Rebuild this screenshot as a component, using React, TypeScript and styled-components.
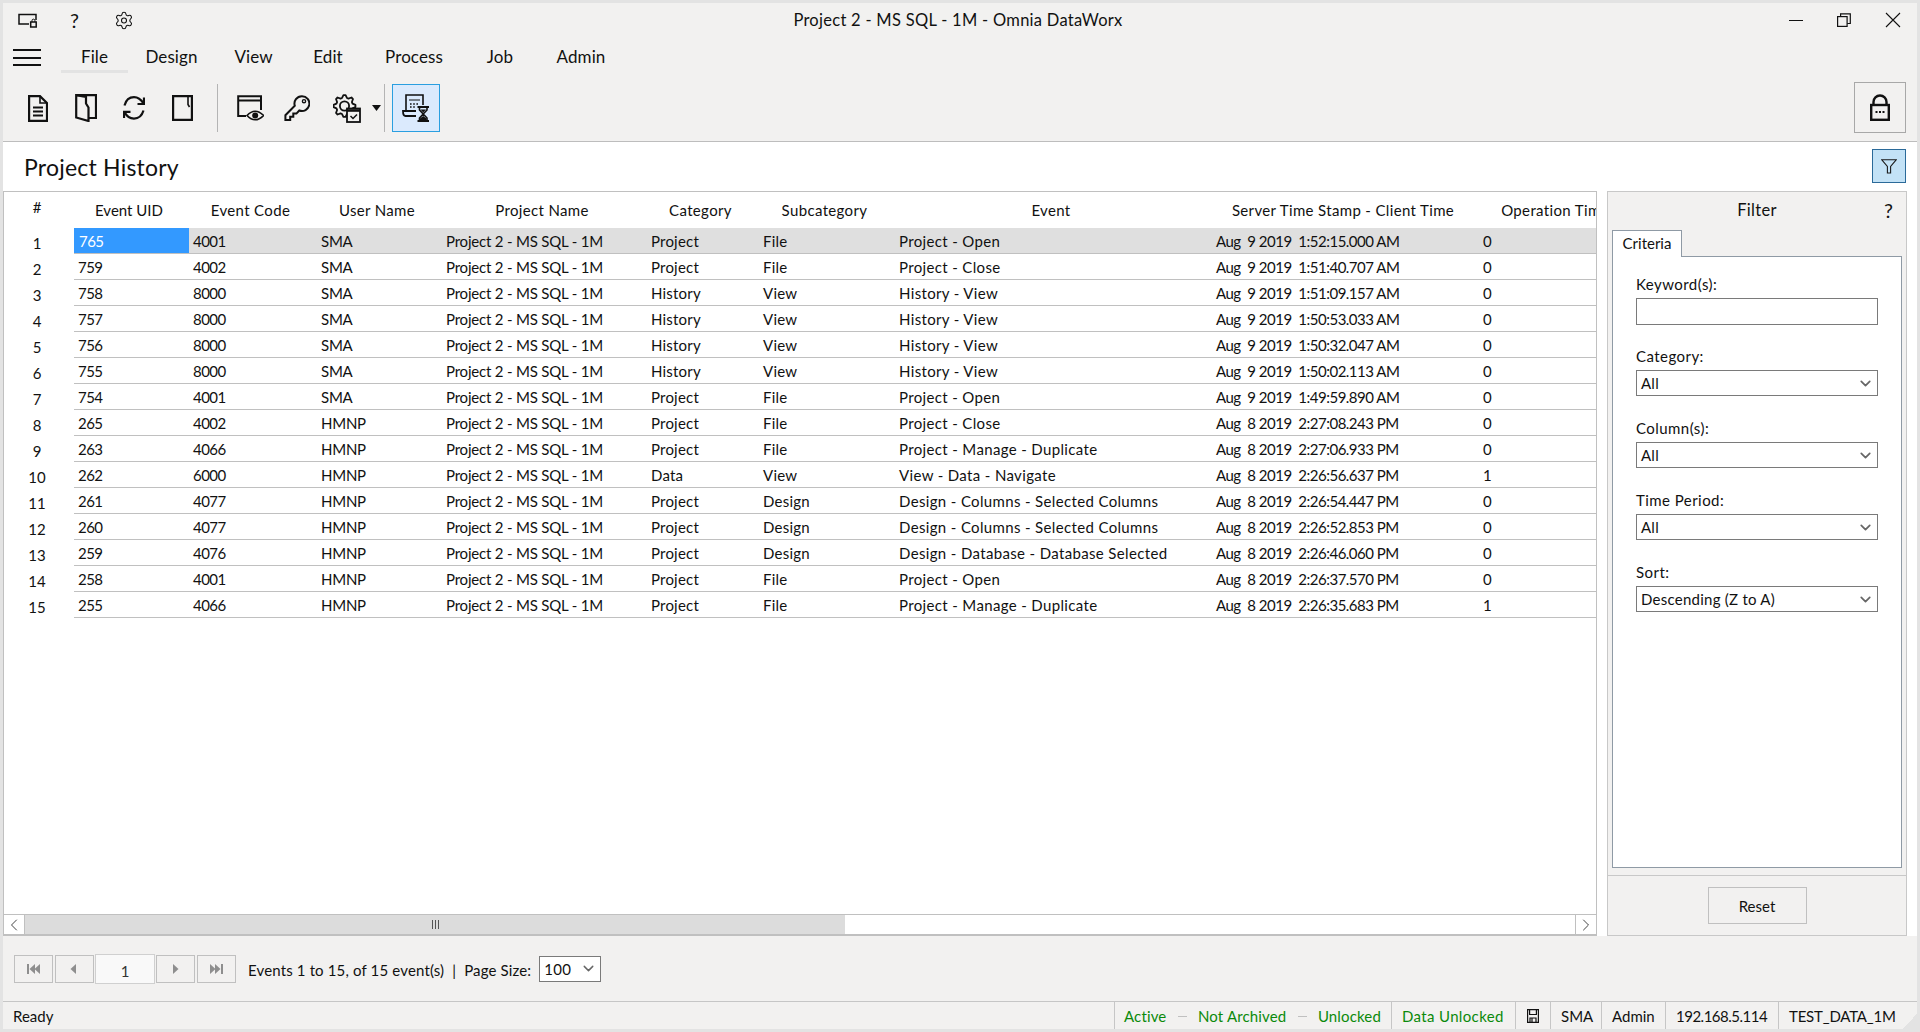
import * as React from 'react';
import styled, { createGlobalStyle } from 'styled-components';
import { ChevronDown, ChevronLeft, ChevronRight, Settings } from 'lucide-react';

const FONT = `Lato, "Noto Sans", "Liberation Sans", sans-serif`;

const GlobalStyle = createGlobalStyle`
  html, body {
    margin: 0;
    padding: 0;
    background: #fff;
    overflow: hidden;
  }
  * {
    box-sizing: border-box;
  }
  body {
    font-family: ${FONT};
    color: #111;
  }
`;

const Frame = styled.div`
  width: 1920px;
  height: 1032px;
  border: 3px solid #e3e3e3;
  display: flex;
  flex-direction: column;
  background: #f2f1f0;
`;

const TitleBar = styled.div`
  flex: none;
  height: 34px;
  display: grid;
  grid-template-columns: 1fr auto 1fr;
  align-items: center;
`;

const QuickIcons = styled.div`
  display: flex;
  align-items: center;
  padding-left: 15px;
`;

const QuickIcon = styled.span<{ $w: number }>`
  width: ${(p) => p.$w}px;
  display: flex;
  align-items: center;
  justify-content: flex-start;
  font-size: 20px;
`;

const WindowTitle = styled.div`
  font-size: 16.5px;
  margin-right: 4px;
  letter-spacing: 0.28px;
`;

const WindowButtons = styled.div`
  display: flex;
  justify-content: flex-end;
  align-items: center;
  gap: 34px;
  padding-right: 16px;
`;

const MenuBar = styled.div`
  flex: none;
  height: 37px;
  display: flex;
  align-items: flex-start;
`;

const Hamburger = styled.div`
  width: 28px;
  height: 17px;
  margin: 12px 20px 0 10px;
  border-top: 2px solid #111;
  border-bottom: 2px solid #111;
  position: relative;
  &::after {
    content: '';
    position: absolute;
    left: 0;
    right: 0;
    top: 6px;
    height: 2px;
    background: #111;
  }
`;

const MenuItem = styled.div<{ $w: number; $active?: boolean }>`
  width: ${(p) => p.$w}px;
  height: 36px;
  padding-top: 9px;
  line-height: 22px;
  font-size: 17px;
  letter-spacing: 0.1px;
  text-align: center;
  border-bottom: 3px solid ${(p) => (p.$active ? '#e3e3e3' : 'transparent')};
`;

const Toolbar = styled.div`
  flex: none;
  height: 68px;
  display: flex;
  align-items: center;
  padding-top: 1px;
  border-bottom: 1px solid #bdbdbd;
`;

const ToolIcon = styled.span<{ $left: number }>`
  display: flex;
  margin-left: ${(p) => p.$left}px;
`;

const ToolSeparator = styled.span<{ $left: number }>`
  width: 1px;
  height: 48px;
  background: #b4b4b4;
  margin-left: ${(p) => p.$left}px;
`;

const ActiveTool = styled.button`
  width: 48px;
  height: 48px;
  margin-left: 7px;
  padding: 0;
  border: 1px solid #2a9fe0;
  background: #dbeafd;
  display: flex;
  align-items: center;
  justify-content: center;
`;

const LockButton = styled.button`
  margin: -1px 11px 0 auto;
  width: 52px;
  height: 51px;
  padding: 0;
  border: 1px solid #a8a8a8;
  background: transparent;
  display: flex;
  align-items: center;
  justify-content: center;
`;

const Workspace = styled.div`
  flex: none;
  background: #fff;
  display: flex;
  flex-direction: column;
`;

const PageHead = styled.div`
  height: 49px;
  padding: 7px 11px 0 21px;
  display: flex;
  justify-content: space-between;
  align-items: flex-start;
`;

const PageTitle = styled.h1`
  margin: 1px 0 0;
  font-size: 23px;
  line-height: 34px;
  font-weight: 400;
  letter-spacing: 0.22px;
`;

const FilterToggle = styled.button`
  width: 34px;
  height: 34px;
  padding: 0;
  border: 1px solid #2b6a99;
  background: #c3e2f6;
  display: flex;
  align-items: center;
  justify-content: center;
`;

const MainRow = styled.div`
  height: 745px;
  display: flex;
  gap: 10px;
  padding-right: 10px;
`;

const TableBox = styled.div`
  width: 1594px;
  border: 1px solid #c0c0c0;
  border-bottom-width: 2px;
  display: flex;
  flex-direction: column;
  overflow: hidden;
`;

const TableBody = styled.div`
  flex: 1;
  overflow: hidden;
  font-size: 15px;
`;

const COLUMNS = '115px 128px 125px 205px 112px 136px 317px 267px 157px';

// the reference font sets digits narrower and words wider than ours
const COLUMN_SPACING = [-0.55, -0.55, -0.25, -0.2, 0.2, 0.25, 0.35, -0.5, 0];

const HeadRow = styled.div`
  display: flex;
  height: 36px;
`;

const HeadNumber = styled.div`
  width: 70px;
  flex: none;
  padding: 6px 4px 0 0;
  text-align: center;
  line-height: 18px;
`;

const HeadCells = styled.div`
  display: grid;
  grid-template-columns: ${COLUMNS};
  flex: none;
`;

const HeadCell = styled.div`
  padding: 8px 5px 0 0;
  line-height: 20px;
  text-align: center;
  white-space: nowrap;
  letter-spacing: 0.35px;
  &:first-child {
    letter-spacing: 0;
  }
`;

const DataRow = styled.div`
  display: flex;
  height: 26px;
`;

const RowNumber = styled.div`
  width: 70px;
  flex: none;
  padding: 2px 4px 0 0;
  line-height: 26px;
  text-align: center;
`;

const DataCells = styled.div<{ $selected?: boolean }>`
  display: grid;
  grid-template-columns: ${COLUMNS};
  flex: none;
  height: 26px;
  border-bottom: 1px solid #c0c0c0;
  background: ${(p) => (p.$selected ? '#dfdfdf' : 'transparent')};
`;

const DataCell = styled.div<{ $current?: boolean; $spacing: number }>`
  height: 25px;
  padding: 1px 0 0 ${(p) => (p.$current ? 5 : 4)}px;
  line-height: 24px;
  letter-spacing: ${(p) => p.$spacing}px;
  white-space: pre;
  overflow: hidden;
  background: ${(p) => (p.$current ? '#3399ff' : 'transparent')};
  color: ${(p) => (p.$current ? '#fff' : '#111')};
`;

const ScrollBar = styled.div`
  height: 20px;
  display: flex;
  border-top: 1px solid #c0c0c0;
`;

const ScrollArrow = styled.div`
  width: 21px;
  display: flex;
  align-items: center;
  justify-content: center;
  color: #444;
  background: #fff;
`;

const ScrollArrowLeft = styled(ScrollArrow)`
  border-right: 1px solid #c0c0c0;
`;

const ScrollArrowRight = styled(ScrollArrow)`
  border-left: 1px solid #c0c0c0;
`;

const ScrollThumb = styled.div`
  width: 820px;
  background: #dcdcdc;
  display: flex;
  align-items: center;
  justify-content: center;
  gap: 2px;
  span {
    width: 1px;
    height: 9px;
    background: #555;
  }
`;

const ScrollTrack = styled.div`
  flex: 1;
`;

const FilterPanel = styled.aside`
  width: 300px;
  border: 1px solid #c8c8c8;
  background: #f2f1f0;
  display: flex;
  flex-direction: column;
  font-size: 15px;
`;

const FilterHead = styled.div`
  height: 38px;
  display: grid;
  grid-template-columns: 1fr auto;
  align-items: center;
  padding: 0 13px 2px 22px;
`;

const FilterTitle = styled.div`
  text-align: center;
  font-size: 16.5px;
  letter-spacing: 0.3px;
`;

const FilterHelp = styled.div`
  font-size: 20px;
`;

const TabRow = styled.div`
  display: flex;
  padding-left: 4px;
  margin-bottom: -1px;
  position: relative;
`;

const Tab = styled.div`
  width: 70px;
  height: 27px;
  line-height: 24px;
  text-align: center;
  background: #fff;
  border: 1px solid #8f9aa5;
  border-bottom: none;
`;

const TabPane = styled.div`
  margin: 0 4px;
  height: 612px;
  border: 1px solid #8f9aa5;
  background: #fff;
  padding: 18px 0 0 23px;
  display: flex;
  flex-direction: column;
  gap: 23px;
`;

const Field = styled.div`
  display: flex;
  flex-direction: column;
  gap: 5px;
`;

const FieldLabel = styled.label`
  line-height: 18px;
  letter-spacing: 0.45px;
`;

const KeywordInput = styled.input`
  width: 242px;
  height: 27px;
  margin-bottom: -1px;
  border: 1px solid #7a7a7a;
  background: #fff;
  padding: 0 4px;
`;

const SelectBox = styled.div<{ $w: number }>`
  width: ${(p) => p.$w}px;
  height: 26px;
  border: 1px solid #7a7a7a;
  background: #fff;
  padding: 0 3px 0 4px;
  letter-spacing: 0.25px;
  display: flex;
  align-items: center;
  justify-content: space-between;
  color: #111;
  svg {
    color: #666;
  }
`;

const FilterFoot = styled.div`
  flex: 1;
  margin-top: 7px;
  border-top: 1px solid #c8c8c8;
  display: flex;
  justify-content: center;
  padding-top: 11px;
`;

const ResetButton = styled.button`
  width: 99px;
  height: 37px;
  padding: 1px 0 0;
  border: 1px solid #c0c0c0;
  background: #f2f1f0;
  font: 15px ${FONT};
  color: #111;
`;

const Pager = styled.div`
  flex: none;
  height: 66px;
  border-bottom: 1px solid #c6c6c6;
  display: flex;
  align-items: center;
  padding: 0 0 0 11px;
  font-size: 15px;
`;

const PagerButton = styled.button`
  width: 39px;
  height: 28px;
  margin-right: 2px;
  padding: 0;
  border: 1px solid #c0c0c0;
  background: #f2f1f0;
  display: flex;
  align-items: center;
  justify-content: center;
`;

const PageNumber = styled.div`
  width: 60px;
  height: 30px;
  margin: 0 1px 0 -1px;
  border: 1px solid #d0d0d0;
  background: #f9f9f9;
  text-align: center;
  line-height: 33px;
  color: #333;
`;

const PagerText = styled.span`
  margin-left: 10px;
  padding-top: 3px;
  white-space: pre;
  letter-spacing: 0.15px;
`;

const PageSize = styled.div`
  margin-left: 8px;
`;

const StatusBar = styled.div`
  flex: 1;
  min-height: 0;
  display: flex;
  align-items: stretch;
  font-size: 15px;
  position: relative;
`;

const StatusReady = styled.div`
  width: 1111px;
  padding: 1px 0 0 10px;
  line-height: 26px;
`;

const StatusCell = styled.div<{ $w: number; $green?: boolean; $center?: boolean; $spacing?: number }>`
  width: ${(p) => p.$w}px;
  border-left: 1px solid #c6c6c6;
  padding: 1px 0 0 ${(p) => (p.$center ? 0 : 10)}px;
  display: flex;
  align-items: center;
  justify-content: ${(p) => (p.$center ? 'center' : 'flex-start')};
  color: ${(p) => (p.$green ? '#0b8a0b' : '#111')};
  letter-spacing: ${(p) => p.$spacing ?? 0}px;
  white-space: nowrap;
`;

const StateCell = styled(StatusCell)`
  justify-content: space-between;
  padding-left: 9px;
  padding-right: 10px;
`;

const StateDash = styled.span`
  width: 9px;
  height: 1px;
  background: #c0c0c0;
`;

const SizeGrip = styled.div`
  position: absolute;
  right: 0;
  bottom: 0;
  width: 15px;
  height: 15px;
  background: linear-gradient(135deg, transparent 50%, #e3e3e3 50%);
`;

// icons drawn to the pixel size they have in the toolbar
const MonitorLockIcon = () => (
  <svg width="19" height="15" viewBox="0 0 19 15" fill="none" stroke="#111" strokeWidth="1.5">
    <path d="M11 11H1V1.5H18V7" />
    <rect x="12.7" y="9" width="5.5" height="5" />
    <path d="M14 9V7.6a1.4 1.4 0 0 1 2.9 0V9" strokeWidth="1" />
  </svg>
);

const MinimizeIcon = () => (
  <svg width="14" height="14" viewBox="0 0 14 14" stroke="#111" strokeWidth="1">
    <path d="M0 7.5H14" />
  </svg>
);

const RestoreIcon = () => (
  <svg width="14" height="14" viewBox="0 0 14 14" fill="none" stroke="#111" strokeWidth="1.2">
    <rect x="0.6" y="3.6" width="9.5" height="9.8" />
    <path d="M3.6 3.5V.8H13.3V10.5H10.2" />
  </svg>
);

const CloseIcon = () => (
  <svg width="16" height="16" viewBox="0 0 16 16" stroke="#111" strokeWidth="1.1">
    <path d="M1 1L15 15M15 1L1 15" />
  </svg>
);

const DocIcon = () => (
  <svg width="20" height="27" viewBox="0 0 20 27" fill="none" stroke="#111" strokeWidth="2.2">
    <path d="M1.1 1.1H12L19 8V25.9H1.1Z" />
    <path d="M12 1.1V8H19" strokeWidth="1.6" />
    <path d="M5 12.5H15M5 16.5H15M5 20.5H15" />
  </svg>
);

const OpenBookIcon = () => (
  <svg width="22" height="28" viewBox="0 0 22 28" fill="none" stroke="#111" strokeWidth="2.2">
    <path d="M1 1.2H21V24H14" />
    <path d="M1.2 1.2L11 3V9.5L13.5 13.5V27L1.2 23.5Z" />
  </svg>
);

const RefreshIcon = () => (
  <svg width="22" height="24" viewBox="0 0 22 24" fill="none" stroke="#111" strokeWidth="2.2">
    <path d="M1.5 9.5C3 4 7 1.2 11 1.2C15 1.2 18 3.5 20.5 7.5" />
    <path d="M20.5 14.5C19 19.5 15.5 22.6 11 22.6C7 22.6 3.5 20 1.5 16" />
    <path d="M21 1.5V8H14.5M1 22V15.8H7.5" />
  </svg>
);

const BookIcon = () => (
  <svg width="21" height="26" viewBox="0 0 21 26" fill="none" stroke="#111" strokeWidth="2.2">
    <path d="M1.1 1.1H19.9V24.9H1.1Z" />
    <path d="M16 1V9.5L17.5 12" strokeWidth="1.6" />
  </svg>
);

const WindowEyeIcon = () => (
  <svg width="27" height="27" viewBox="0 0 27 27" fill="none" stroke="#111" strokeWidth="2">
    <path d="M24 15V1.2H1.2V21H9" />
    <path d="M1.2 5.5H24" />
    <path d="M10 20.5Q18 12 26.5 20.5Q18 29 10 20.5Z" fill="#f2f1f0" strokeWidth="1.6" />
    <circle cx="18.2" cy="20.5" r="3" fill="#111" stroke="none" />
  </svg>
);

const KeyIcon = () => (
  <svg width="26" height="27" viewBox="0 0 26 27" fill="none" stroke="#111" strokeWidth="2">
    <path d="M18 1.2a7.4 7.4 0 1 1-2.7 14.3L12.4 18.6H9.3V21.8H6.2V25H1.4V20.2L10.8 10.8A7.4 7.4 0 0 1 18 1.2Z" />
    <circle cx="20" cy="6.2" r="1.6" strokeWidth="1.4" />
  </svg>
);

const gearPath = (cx: number, cy: number, outer: number, inner: number, teeth: number) => {
  const pts: string[] = [];
  for (let i = 0; i < teeth * 4; i++) {
    const r = i % 4 === 0 || i % 4 === 1 ? outer : inner;
    const a = ((i - 0.5) / (teeth * 4)) * Math.PI * 2;
    pts.push(`${(cx + r * Math.cos(a)).toFixed(2)} ${(cy + r * Math.sin(a)).toFixed(2)}`);
  }
  return `M${pts.join('L')}Z`;
};

const GearBoxIcon = () => (
  <svg width="28" height="29" viewBox="0 0 28 29" fill="none" stroke="#111" strokeWidth="1.8">
    <path d={gearPath(11.5, 12, 11, 8.4, 8)} strokeLinejoin="round" />
    <circle cx="11.5" cy="12" r="4.6" />
    <rect x="14" y="14.5" width="13" height="13.5" fill="#f2f1f0" />
    <path d="M14 16.5H27" strokeWidth="2.6" />
    <path d="M17.5 22L20 24.5L24 20.5" strokeWidth="1.5" />
  </svg>
);

const HistoryIcon = () => (
  <svg width="28" height="28" viewBox="0 0 28 28" fill="none" stroke="#111" strokeWidth="1.6">
    <path d="M4 16V1H21V11" />
    <path d="M7 6H18" strokeWidth="1" />
    <path d="M8 10H9.6M11.2 10H12.8M14.4 10H16M8 13H9.6M11.2 13H12.8" strokeWidth="1.4" />
    <path d="M14 22H3.5C1.8 22 1 20.5 1 17H14" strokeWidth="1.8" />
    <path d="M15.5 13H27M15.5 27H27" strokeWidth="2" />
    <path d="M17.5 13V16L21.2 20L17.5 24V27M25 13V16L21.2 20L25 24V27" strokeWidth="1.6" />
    <path d="M18 27V24.5L21.2 22L24.5 24.5V27ZM18.5 15.5H24L21.2 18.5Z" fill="#111" stroke="none" />
  </svg>
);

const PadlockIcon = () => (
  <svg width="20" height="27" viewBox="0 0 20 27" fill="none" stroke="#111" strokeWidth="2.4">
    <path d="M3.5 11V8a6.5 6.5 0 0 1 13 0V11" />
    <rect x="1.2" y="11" width="17.6" height="14.8" />
    <path d="M5.5 18H7.5M9 18H11M12.5 18H14.5" strokeWidth="1.8" />
  </svg>
);

const FunnelIcon = () => (
  <svg width="16" height="15" viewBox="0 0 16 15" fill="none" stroke="#1a1a1a" strokeWidth="1.1">
    <path d="M.8 .8H15.2L9.6 7.4V14H6.4V7.4Z" />
  </svg>
);

const FloppyIcon = () => (
  <svg width="12" height="14" viewBox="0 0 12 14" fill="none" stroke="#111" strokeWidth="1.2">
    <path d="M.6 .6H11.4V13.4H.6Z" />
    <path d="M2.6 1V5.5H9.4V1M3 13V9H9V13M5 9.5V13" />
  </svg>
);

const PAGER_SHAPES: Record<string, string> = {
  first: 'M1 1H3V11H1ZM9 1V11L3.5 6ZM14 1V11L8.5 6Z',
  prev: 'M9 1V11L3.5 6Z',
  next: 'M5 1V11L10.5 6Z',
  last: 'M1 1V11L6.5 6ZM6 1V11L11.5 6ZM12 1H14V11H12Z',
};

const PagerIcon = ({ kind }: { kind: string }) => (
  <svg width="15" height="12" viewBox="0 0 15 12" fill="#8e8e8e">
    <path d={PAGER_SHAPES[kind]} />
  </svg>
);

const HEADERS = [
  'Event UID',
  'Event Code',
  'User Name',
  'Project Name',
  'Category',
  'Subcategory',
  'Event',
  'Server Time Stamp - Client Time',
  'Operation Time',
];

const PROJECT = 'Project 2 - MS SQL - 1M';

const ROWS: string[][] = [
  ['765', '4001', 'SMA', PROJECT, 'Project', 'File', 'Project - Open', 'Aug  9 2019  1:52:15.000 AM', '0'],
  ['759', '4002', 'SMA', PROJECT, 'Project', 'File', 'Project - Close', 'Aug  9 2019  1:51:40.707 AM', '0'],
  ['758', '8000', 'SMA', PROJECT, 'History', 'View', 'History - View', 'Aug  9 2019  1:51:09.157 AM', '0'],
  ['757', '8000', 'SMA', PROJECT, 'History', 'View', 'History - View', 'Aug  9 2019  1:50:53.033 AM', '0'],
  ['756', '8000', 'SMA', PROJECT, 'History', 'View', 'History - View', 'Aug  9 2019  1:50:32.047 AM', '0'],
  ['755', '8000', 'SMA', PROJECT, 'History', 'View', 'History - View', 'Aug  9 2019  1:50:02.113 AM', '0'],
  ['754', '4001', 'SMA', PROJECT, 'Project', 'File', 'Project - Open', 'Aug  9 2019  1:49:59.890 AM', '0'],
  ['265', '4002', 'HMNP', PROJECT, 'Project', 'File', 'Project - Close', 'Aug  8 2019  2:27:08.243 PM', '0'],
  ['263', '4066', 'HMNP', PROJECT, 'Project', 'File', 'Project - Manage - Duplicate', 'Aug  8 2019  2:27:06.933 PM', '0'],
  ['262', '6000', 'HMNP', PROJECT, 'Data', 'View', 'View - Data - Navigate', 'Aug  8 2019  2:26:56.637 PM', '1'],
  ['261', '4077', 'HMNP', PROJECT, 'Project', 'Design', 'Design - Columns - Selected Columns', 'Aug  8 2019  2:26:54.447 PM', '0'],
  ['260', '4077', 'HMNP', PROJECT, 'Project', 'Design', 'Design - Columns - Selected Columns', 'Aug  8 2019  2:26:52.853 PM', '0'],
  ['259', '4076', 'HMNP', PROJECT, 'Project', 'Design', 'Design - Database - Database Selected', 'Aug  8 2019  2:26:46.060 PM', '0'],
  ['258', '4001', 'HMNP', PROJECT, 'Project', 'File', 'Project - Open', 'Aug  8 2019  2:26:37.570 PM', '0'],
  ['255', '4066', 'HMNP', PROJECT, 'Project', 'File', 'Project - Manage - Duplicate', 'Aug  8 2019  2:26:35.683 PM', '1'],
];

const MENU: [string, number][] = [
  ['File', 67],
  ['Design', 87],
  ['View', 77],
  ['Edit', 72],
  ['Process', 100],
  ['Job', 72],
  ['Admin', 90],
];

const FILTERS: [string, string][] = [
  ['Category:', 'All'],
  ['Column(s):', 'All'],
  ['Time Period:', 'All'],
  ['Sort:', 'Descending (Z to A)'],
];

const App = () => (
  <Frame>
    <GlobalStyle />
    <TitleBar>
      <QuickIcons>
        <QuickIcon $w={52}><MonitorLockIcon /></QuickIcon>
        <QuickIcon $w={44}>?</QuickIcon>
        <QuickIcon $w={20}><Settings size={21} strokeWidth={1.3} color="#111" /></QuickIcon>
      </QuickIcons>
      <WindowTitle>Project 2 - MS SQL - 1M - Omnia DataWorx</WindowTitle>
      <WindowButtons>
        <MinimizeIcon />
        <RestoreIcon />
        <CloseIcon />
      </WindowButtons>
    </TitleBar>
    <MenuBar>
      <Hamburger />
      {MENU.map(([label, w], i) => (
        <MenuItem key={label} $w={w} $active={i === 0}>{label}</MenuItem>
      ))}
    </MenuBar>
    <Toolbar>
      <ToolIcon $left={25}><DocIcon /></ToolIcon>
      <ToolIcon $left={27}><OpenBookIcon /></ToolIcon>
      <ToolIcon $left={26}><RefreshIcon /></ToolIcon>
      <ToolIcon $left={27}><BookIcon /></ToolIcon>
      <ToolSeparator $left={24} />
      <ToolIcon $left={19}><WindowEyeIcon /></ToolIcon>
      <ToolIcon $left={20}><KeyIcon /></ToolIcon>
      <ToolIcon $left={23}><GearBoxIcon /></ToolIcon>
      <ToolIcon $left={11}>
        <svg width="9" height="6" viewBox="0 0 9 6"><path d="M0 0H9L4.5 6Z" fill="#111" /></svg>
      </ToolIcon>
      <ToolSeparator $left={3} />
      <ActiveTool><HistoryIcon /></ActiveTool>
      <LockButton><PadlockIcon /></LockButton>
    </Toolbar>
    <Workspace>
      <PageHead>
        <PageTitle>Project History</PageTitle>
        <FilterToggle><FunnelIcon /></FilterToggle>
      </PageHead>
      <MainRow>
        <TableBox>
          <TableBody>
            <HeadRow>
              <HeadNumber>#</HeadNumber>
              <HeadCells>
                {HEADERS.map((h) => <HeadCell key={h}>{h}</HeadCell>)}
              </HeadCells>
            </HeadRow>
            {ROWS.map((r, i) => (
              <DataRow key={r[0]}>
                <RowNumber>{i + 1}</RowNumber>
                <DataCells $selected={i === 0}>
                  {r.map((value, c) => (
                    <DataCell key={c} $current={i === 0 && c === 0} $spacing={COLUMN_SPACING[c]}>
                      {value}
                    </DataCell>
                  ))}
                </DataCells>
              </DataRow>
            ))}
          </TableBody>
          <ScrollBar>
            <ScrollArrowLeft><ChevronLeft size={20} strokeWidth={1.2} /></ScrollArrowLeft>
            <ScrollThumb><span /><span /><span /></ScrollThumb>
            <ScrollTrack />
            <ScrollArrowRight><ChevronRight size={20} strokeWidth={1.2} /></ScrollArrowRight>
          </ScrollBar>
        </TableBox>
        <FilterPanel>
          <FilterHead>
            <FilterTitle>Filter</FilterTitle>
            <FilterHelp>?</FilterHelp>
          </FilterHead>
          <TabRow><Tab>Criteria</Tab></TabRow>
          <TabPane>
            <Field>
              <FieldLabel>Keyword(s):</FieldLabel>
              <KeywordInput />
            </Field>
            {FILTERS.map(([label, value]) => (
              <Field key={label}>
                <FieldLabel>{label}</FieldLabel>
                <SelectBox $w={242}>
                  {value}
                  <ChevronDown size={17} strokeWidth={2.4} />
                </SelectBox>
              </Field>
            ))}
          </TabPane>
          <FilterFoot>
            <ResetButton>Reset</ResetButton>
          </FilterFoot>
        </FilterPanel>
      </MainRow>
    </Workspace>
    <Pager>
      <PagerButton><PagerIcon kind="first" /></PagerButton>
      <PagerButton><PagerIcon kind="prev" /></PagerButton>
      <PageNumber>1</PageNumber>
      <PagerButton><PagerIcon kind="next" /></PagerButton>
      <PagerButton><PagerIcon kind="last" /></PagerButton>
      <PagerText>Events 1 to 15, of 15 event(s)  |  Page Size:</PagerText>
      <PageSize>
        <SelectBox $w={62}>
          100
          <ChevronDown size={17} strokeWidth={2} />
        </SelectBox>
      </PageSize>
    </Pager>
    <StatusBar>
      <StatusReady>Ready</StatusReady>
      <StateCell $w={277} $green $spacing={0.15}>
        <span>Active</span>
        <StateDash />
        <span>Not Archived</span>
        <StateDash />
        <span>Unlocked</span>
      </StateCell>
      <StatusCell $w={124} $green $spacing={0.35}>Data Unlocked</StatusCell>
      <StatusCell $w={35} $center><FloppyIcon /></StatusCell>
      <StatusCell $w={51}>SMA</StatusCell>
      <StatusCell $w={64}>Admin</StatusCell>
      <StatusCell $w={113} $spacing={-0.5}>192.168.5.114</StatusCell>
      <StatusCell $w={139} $spacing={-0.2}>TEST_DATA_1M</StatusCell>
      <SizeGrip />
    </StatusBar>
  </Frame>
);

export default App;
